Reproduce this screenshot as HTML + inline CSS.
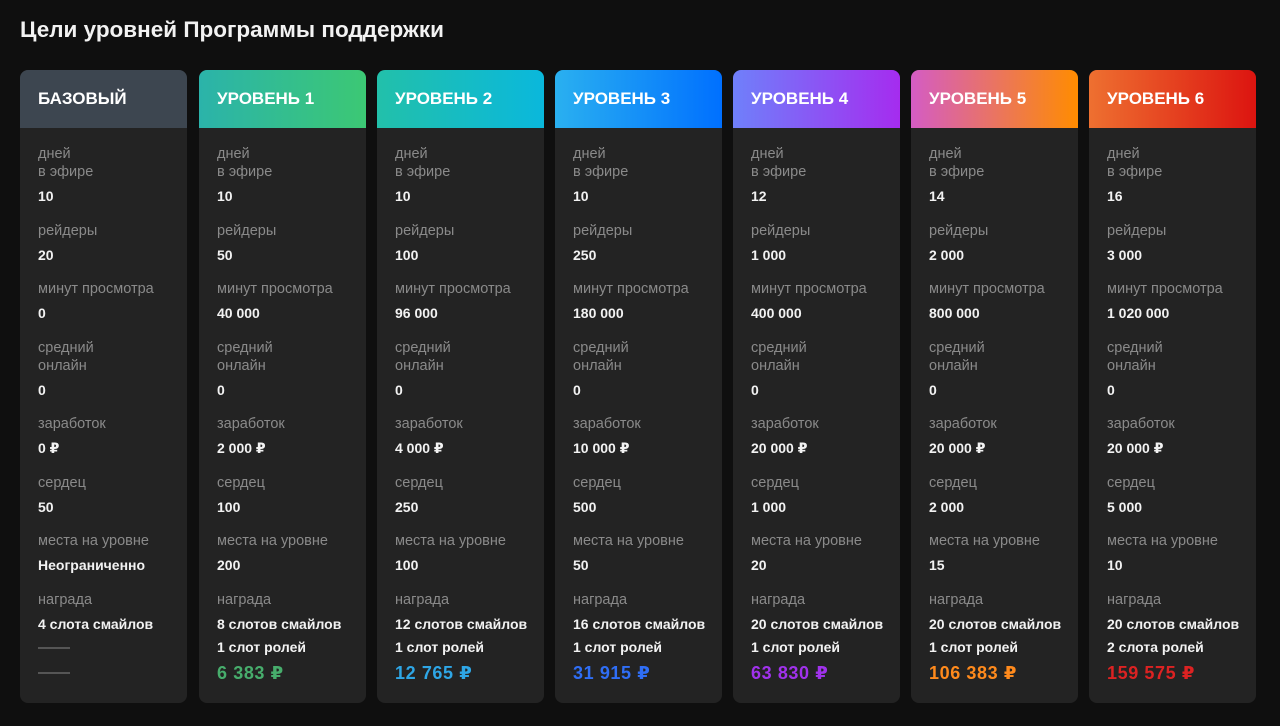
<!DOCTYPE html>
<html><head><meta charset="utf-8"><style>
*{margin:0;padding:0;box-sizing:border-box}
body{width:1280px;height:726px;background:#0f0f0f;font-family:"Liberation Sans","DejaVu Sans",sans-serif;color:#fff;overflow:hidden;position:relative}
h1{position:absolute;left:20px;top:17px;font-size:22.5px;font-weight:bold;color:#f2f2f2;white-space:nowrap}
.card{position:absolute;top:70px;width:167px;height:633px;background:#232323;border-radius:8px;overflow:hidden}
.hd{height:58px;padding-left:18px;line-height:58px;font-size:17px;font-weight:bold;color:#fff}
.bd{padding:17px 0 0 18px}
.g{margin-bottom:13.5px;white-space:nowrap}
.l{font-size:14.5px;line-height:18px;color:#8a8a8a}
.v{font-size:14px;font-weight:bold;line-height:23px;color:#f2f2f2}
.g>.v:nth-child(2){padding-top:4px}
.p{font-size:18px;line-height:26px;font-weight:bold;letter-spacing:.6px;margin-top:1px}
.d{width:32px;height:2px;background:#555;margin:11px 0 23px}
</style></head><body>
<h1>Цели уровней Программы поддержки</h1>

<div class="card" style="left:20px"><div class="hd" style="background:#3d4650">БАЗОВЫЙ</div><div class="bd">
<div class="g"><div class="l">дней<br>в эфире</div><div class="v">10</div></div>
<div class="g"><div class="l">рейдеры</div><div class="v">20</div></div>
<div class="g"><div class="l">минут просмотра</div><div class="v">0</div></div>
<div class="g"><div class="l">средний<br>онлайн</div><div class="v">0</div></div>
<div class="g"><div class="l">заработок</div><div class="v">0 ₽</div></div>
<div class="g"><div class="l">сердец</div><div class="v">50</div></div>
<div class="g"><div class="l">места на уровне</div><div class="v">Неограниченно</div></div>
<div class="g"><div class="l">награда</div><div class="v">4 слота смайлов</div><div class="d"></div><div class="d"></div></div>
</div></div>

<div class="card" style="left:199px"><div class="hd" style="background:linear-gradient(90deg,#2bb3aa,#3cc874)">УРОВЕНЬ 1</div><div class="bd">
<div class="g"><div class="l">дней<br>в эфире</div><div class="v">10</div></div>
<div class="g"><div class="l">рейдеры</div><div class="v">50</div></div>
<div class="g"><div class="l">минут просмотра</div><div class="v">40 000</div></div>
<div class="g"><div class="l">средний<br>онлайн</div><div class="v">0</div></div>
<div class="g"><div class="l">заработок</div><div class="v">2 000 ₽</div></div>
<div class="g"><div class="l">сердец</div><div class="v">100</div></div>
<div class="g"><div class="l">места на уровне</div><div class="v">200</div></div>
<div class="g"><div class="l">награда</div><div class="v">8 слотов смайлов</div><div class="v">1 слот ролей</div><div class="p" style="color:#47ad6c">6 383 ₽</div></div>
</div></div>

<div class="card" style="left:377px"><div class="hd" style="background:linear-gradient(90deg,#22c0aa,#0ab8dc)">УРОВЕНЬ 2</div><div class="bd">
<div class="g"><div class="l">дней<br>в эфире</div><div class="v">10</div></div>
<div class="g"><div class="l">рейдеры</div><div class="v">100</div></div>
<div class="g"><div class="l">минут просмотра</div><div class="v">96 000</div></div>
<div class="g"><div class="l">средний<br>онлайн</div><div class="v">0</div></div>
<div class="g"><div class="l">заработок</div><div class="v">4 000 ₽</div></div>
<div class="g"><div class="l">сердец</div><div class="v">250</div></div>
<div class="g"><div class="l">места на уровне</div><div class="v">100</div></div>
<div class="g"><div class="l">награда</div><div class="v">12 слотов смайлов</div><div class="v">1 слот ролей</div><div class="p" style="color:#2ea6e6">12 765 ₽</div></div>
</div></div>

<div class="card" style="left:555px"><div class="hd" style="background:linear-gradient(90deg,#2ab0f0,#0070ff)">УРОВЕНЬ 3</div><div class="bd">
<div class="g"><div class="l">дней<br>в эфире</div><div class="v">10</div></div>
<div class="g"><div class="l">рейдеры</div><div class="v">250</div></div>
<div class="g"><div class="l">минут просмотра</div><div class="v">180 000</div></div>
<div class="g"><div class="l">средний<br>онлайн</div><div class="v">0</div></div>
<div class="g"><div class="l">заработок</div><div class="v">10 000 ₽</div></div>
<div class="g"><div class="l">сердец</div><div class="v">500</div></div>
<div class="g"><div class="l">места на уровне</div><div class="v">50</div></div>
<div class="g"><div class="l">награда</div><div class="v">16 слотов смайлов</div><div class="v">1 слот ролей</div><div class="p" style="color:#2f6ef5">31 915 ₽</div></div>
</div></div>

<div class="card" style="left:733px"><div class="hd" style="background:linear-gradient(90deg,#6f80fa,#a52cef)">УРОВЕНЬ 4</div><div class="bd">
<div class="g"><div class="l">дней<br>в эфире</div><div class="v">12</div></div>
<div class="g"><div class="l">рейдеры</div><div class="v">1 000</div></div>
<div class="g"><div class="l">минут просмотра</div><div class="v">400 000</div></div>
<div class="g"><div class="l">средний<br>онлайн</div><div class="v">0</div></div>
<div class="g"><div class="l">заработок</div><div class="v">20 000 ₽</div></div>
<div class="g"><div class="l">сердец</div><div class="v">1 000</div></div>
<div class="g"><div class="l">места на уровне</div><div class="v">20</div></div>
<div class="g"><div class="l">награда</div><div class="v">20 слотов смайлов</div><div class="v">1 слот ролей</div><div class="p" style="color:#a032ec">63 830 ₽</div></div>
</div></div>

<div class="card" style="left:911px"><div class="hd" style="background:linear-gradient(90deg,#d45cc4,#ff8c00)">УРОВЕНЬ 5</div><div class="bd">
<div class="g"><div class="l">дней<br>в эфире</div><div class="v">14</div></div>
<div class="g"><div class="l">рейдеры</div><div class="v">2 000</div></div>
<div class="g"><div class="l">минут просмотра</div><div class="v">800 000</div></div>
<div class="g"><div class="l">средний<br>онлайн</div><div class="v">0</div></div>
<div class="g"><div class="l">заработок</div><div class="v">20 000 ₽</div></div>
<div class="g"><div class="l">сердец</div><div class="v">2 000</div></div>
<div class="g"><div class="l">места на уровне</div><div class="v">15</div></div>
<div class="g"><div class="l">награда</div><div class="v">20 слотов смайлов</div><div class="v">1 слот ролей</div><div class="p" style="color:#ff8a1c">106 383 ₽</div></div>
</div></div>

<div class="card" style="left:1089px"><div class="hd" style="background:linear-gradient(90deg,#ee7030,#dc1410)">УРОВЕНЬ 6</div><div class="bd">
<div class="g"><div class="l">дней<br>в эфире</div><div class="v">16</div></div>
<div class="g"><div class="l">рейдеры</div><div class="v">3 000</div></div>
<div class="g"><div class="l">минут просмотра</div><div class="v">1 020 000</div></div>
<div class="g"><div class="l">средний<br>онлайн</div><div class="v">0</div></div>
<div class="g"><div class="l">заработок</div><div class="v">20 000 ₽</div></div>
<div class="g"><div class="l">сердец</div><div class="v">5 000</div></div>
<div class="g"><div class="l">места на уровне</div><div class="v">10</div></div>
<div class="g"><div class="l">награда</div><div class="v">20 слотов смайлов</div><div class="v">2 слота ролей</div><div class="p" style="color:#dc2222">159 575 ₽</div></div>
</div></div>
</body></html>
